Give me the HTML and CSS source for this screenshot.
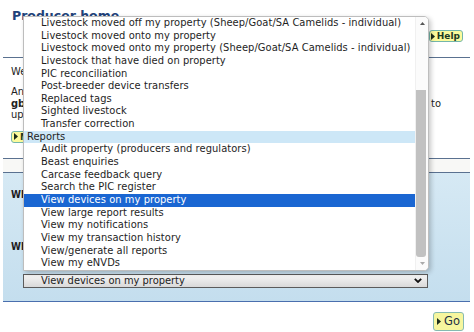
FILE: index.html
```html
<!DOCTYPE html>
<html lang="en">
<head>
<meta charset="utf-8">
<title>Producer home</title>
<link rel="stylesheet" href="styles.css">
</head>
<body>
<div class="page">
  <header class="head">
    <h1 class="title">Producer home</h1>
    <div class="toolbar">
      <button class="btn btn-help"><svg class="arr" viewBox="0 0 4 7" width="4" height="7"><path d="M0 0L4 3.5L0 7Z"/></svg>Help</button>
    </div>
  </header>

  <section class="content">
    <p class="welcome">Welcome to the NLIS Database, Producer.</p>
    <div class="notice">
      <div>Announcement: new transfer rules apply from 1 July.</div>
      <div class="notice-row"><span><b>gbcd1234</b> please review your property details and remember</span><span>to</span></div>
      <div>update your contact information.</div>
    </div>
    <button class="btn btn-more"><svg class="arr" viewBox="0 0 4 7" width="4" height="7"><path d="M0 0L4 3.5L0 7Z"/></svg>More</button>
  </section>

  <div class="sep"></div>

  <section class="panel">
    <div class="field">
      <label class="label">What would you like to do?</label>
      <div class="select"><span>Reports</span></div>
    </div>
    <div class="field field-second">
      <label class="label">Which report?</label>
      <div class="select select-main">
        <span>View devices on my property</span>
        <svg class="chev" viewBox="0 0 8 5" width="8" height="5"><path d="M0.8 0.8L4 4L7.2 0.8" fill="none" stroke="#111" stroke-width="1.8"/></svg>
      </div>
    </div>
  </section>

  <div class="actions">
    <button class="btn btn-go"><svg class="arr" viewBox="0 0 4 7" width="4" height="7"><path d="M0 0L4 3.5L0 7Z"/></svg>Go</button>
  </div>

  <div class="popup">
    <ul class="options">
      <li class="opt">Livestock moved off my property (Sheep/Goat/SA Camelids - individual)</li>
      <li class="opt">Livestock moved onto my property</li>
      <li class="opt">Livestock moved onto my property (Sheep/Goat/SA Camelids - individual)</li>
      <li class="opt">Livestock that have died on property</li>
      <li class="opt">PIC reconciliation</li>
      <li class="opt">Post-breeder device transfers</li>
      <li class="opt">Replaced tags</li>
      <li class="opt">Sighted livestock</li>
      <li class="opt">Transfer correction</li>
      <li class="group">Reports</li>
      <li class="opt">Audit property (producers and regulators)</li>
      <li class="opt">Beast enquiries</li>
      <li class="opt">Carcase feedback query</li>
      <li class="opt">Search the PIC register</li>
      <li class="opt selected">View devices on my property</li>
      <li class="opt">View large report results</li>
      <li class="opt">View my notifications</li>
      <li class="opt">View my transaction history</li>
      <li class="opt">View/generate all reports</li>
      <li class="opt">View my eNVDs</li>
    </ul>
    <div class="scrollbar">
      <div class="sb-arrow"><svg viewBox="0 0 5 3" width="5" height="3"><path d="M0 3L2.5 0L5 3Z" fill="#555"/></svg></div>
      <div class="sb-track"><div class="sb-thumb"></div></div>
      <div class="sb-arrow"><svg viewBox="0 0 5 3" width="5" height="3"><path d="M0 0L2.5 3L5 0Z" fill="#aaa"/></svg></div>
    </div>
  </div>
</div>
</body>
</html>
```

FILE: styles.css
```css
* { box-sizing: border-box; }
html, body { margin: 0; padding: 0; background: #fff; }
body {
  font-family: "DejaVu Sans Condensed", "DejaVu Sans", sans-serif;
  font-stretch: semi-condensed;
  font-size: 11px;
  color: #222;
}
.page {
  position: relative;
  display: flow-root;
  margin: 0 4px 0 3px;
  padding-top: 8px;
  height: 332px;
}
.head {
  border-bottom: 1px solid #5a7190;
  padding-bottom: 15px;
}
.title {
  margin: 0;
  padding-left: 9px;
  font-family: "DejaVu Sans", sans-serif;
  font-stretch: normal;
  font-size: 12.5px;
  line-height: 15px;
  font-weight: bold;
  color: #21427a;
}
.toolbar {
  display: flex;
  justify-content: flex-end;
  margin-top: 7px;
  padding-right: 7px;
}
.btn {
  display: inline-flex;
  align-items: center;
  gap: 2px;
  background: #fbfb9c;
  border: 1px solid #74b6aa;
  border-radius: 3px;
  font-family: "DejaVu Sans", sans-serif;
  color: #1d3a24;
  padding: 0 2px;
  cursor: pointer;
}
.arr { fill: #1b2d1b; flex: none; }
.btn-help {
  height: 12px;
  font-size: 9px;
  font-weight: bold;
  line-height: 10px;
  padding: 0 2px 0 1px;
}
.content {
  padding: 0 8px 15px 8px;
  border-bottom: 1px solid #5a7190;
}
.welcome {
  margin: 7px 0 0 0;
  line-height: 13px;
}
.notice {
  margin-top: 8px;
  line-height: 11.5px;
  width: 430px;
}
.notice-row {
  display: flex;
  justify-content: space-between;
}
.btn-more {
  margin-top: 10px;
  height: 12px;
  font-size: 9px;
  font-weight: bold;
  line-height: 10px;
}
.sep {
  height: 13px;
  background: #f8f8f6;
}
.panel {
  border-top: 1px solid #5a7190;
  border-bottom: 1px solid #4a6fae;
  background: linear-gradient(to bottom, #d6e9f4, #c4deee);
  padding: 15px 0 13px 0;
}
.field { display: flex; flex-direction: column; align-items: flex-start; }
.label {
  font-family: "DejaVu Sans", sans-serif;
  font-weight: bold;
  font-size: 10px;
  line-height: 13px;
  color: #1d1d1d;
  padding-left: 8px;
}
.field-second { margin-top: 20px; }
.select {
  width: 405px;
  height: 14px;
  margin: 5px 0 0 20px;
  border: 1px solid #5b5b5b;
  background: linear-gradient(to bottom, #f5f5f5, #d9d9d9);
  display: flex;
  align-items: center;
  justify-content: space-between;
  padding: 0 5px 0 17px;
  line-height: 12px;
}
.select-main { margin-top: 20.5px; }
.chev { flex: none; }
.actions {
  display: flex;
  justify-content: flex-end;
  padding: 10px 6px 0 0;
}
.btn-go {
  height: 19px;
  width: 31px;
  font-size: 11.5px;
  gap: 3px;
  padding: 0 3px;
  color: #1f2f44;
  border-color: #86bab2;
  background: #f6f69e;
}

/* open dropdown list */
.popup {
  position: absolute;
  left: 20px;
  top: 16px;
  width: 406px;
  height: 255px;
  border: 1px solid #bdbdbd;
  border-radius: 0 5px 5px 0;
  background: #fff;
  box-shadow: 2px 2px 5px rgba(0,0,0,0.22);
  display: flex;
  overflow: hidden;
}
.options {
  list-style: none;
  margin: 0;
  padding: 0;
  flex: 1;
}
.options li {
  height: 12.65px;
  line-height: 12.65px;
  white-space: nowrap;
  color: #1e1e1e;
  letter-spacing: 0.06px;
}
.opt { padding-left: 17px; }
.group { padding-left: 3px; background: #cde7f7; }
.selected { background: #1a66d2; color: #fff !important; }
.scrollbar {
  width: 13px;
  display: flex;
  flex-direction: column;
  background: #fbfbfb;
  border-left: 1px solid #f0f0f0;
}
.sb-arrow {
  height: 13px;
  display: flex;
  align-items: center;
  justify-content: center;
}
.sb-track {
  flex: 1;
  display: flex;
  flex-direction: column;
}
.sb-thumb {
  margin: 60px 2px 0 0;
  flex: 1;
  background: #c1c1c1;
  border-radius: 0 0 3px 3px;
}
```
